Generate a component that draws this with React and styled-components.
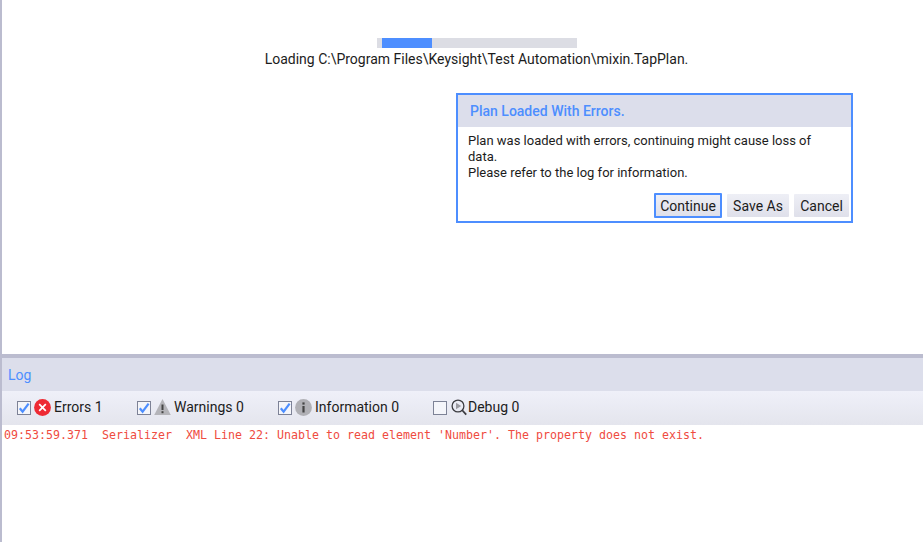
import React from 'react';
import styled, { createGlobalStyle } from 'styled-components';

const GlobalStyle = createGlobalStyle`
  html, body {
    margin: 0;
    padding: 0;
    height: 100%;
    background: #fff;
    overflow: hidden;
  }
  #root {
    height: 100%;
  }
`;

const Page = styled.div`
  display: flex;
  flex-direction: column;
  height: 542px;
  border-left: 2px solid #bbbccf;
  font-family: Roboto, 'Liberation Sans', sans-serif;
  font-size: 14px;
  color: #1c1c1c;
`;

const PlanArea = styled.div`
  height: 354px;
  flex: none;
  display: flex;
  flex-direction: column;
  align-items: center;
  padding: 38px 0 0 28px;
  box-sizing: border-box;
`;

const Track = styled.div`
  width: 200px;
  height: 10px;
  background: #dcdde4;
  padding-left: 5px;
  box-sizing: border-box;
`;

const Fill = styled.div`
  height: 100%;
  background: #4d8eff;
`;

const LoadingText = styled.div`
  margin-top: 2px;
  height: 18px;
  line-height: 18px;
  white-space: nowrap;
`;

const Dialog = styled.div`
  align-self: flex-end;
  width: 397px;
  height: 130px;
  margin: 25px 70px 0 0;
  box-sizing: border-box;
  border: 2px solid #4d8eff;
  display: flex;
  flex-direction: column;
`;

const DialogTitle = styled.div`
  height: 32px;
  flex: none;
  background: #dcdeeb;
  color: #4d8eff;
  font-weight: 500;
  line-height: 32px;
  padding-left: 12px;
`;

const DialogBody = styled.div`
  flex: 1;
  padding: 6px 10px 0;
  line-height: 16px;
  font-size: 13px;
`;

const DialogActions = styled.div`
  display: flex;
  justify-content: flex-end;
  gap: 5px;
  padding: 0 2px 3px 0;
`;

const Button = styled.button`
  height: ${props => (props.$primary ? '25px' : '23px')};
  margin: ${props => (props.$primary ? '0' : '1px 0')};
  width: ${props => props.$width}px;
  padding: 0;
  box-sizing: border-box;
  border: ${props => (props.$primary ? '2px solid #4d8eff' : 'none')};
  border-radius: 1px;
  background: linear-gradient(#eeeff6, #dfe0ea);
  font-family: inherit;
  font-size: 14px;
  color: #1c1c1c;
`;

const Splitter = styled.div`
  height: 4px;
  flex: none;
  background: #bbbccf;
`;

const LogHeader = styled.div`
  height: 33px;
  flex: none;
  background: #dcdeeb;
  color: #4d8eff;
  line-height: 35px;
  padding-left: 6px;
`;

const Toolbar = styled.div`
  height: 34px;
  flex: none;
  display: flex;
  align-items: center;
  padding: 0 0 2px 15px;
  box-sizing: border-box;
  background: linear-gradient(#eff0f9, #e4e5ed);
`;

const Filter = styled.div`
  display: flex;
  align-items: center;
  width: ${props => props.$width}px;
  flex: none;
  white-space: nowrap;
`;

const CheckBox = styled.div`
  width: 14px;
  height: 14px;
  box-sizing: border-box;
  border: 1px solid #7d8296;
  background: #f4f5fa;
  margin: 2px 3px 0 0;
  flex: none;

  svg {
    display: block;
  }
`;

const FilterIcon = styled.svg`
  width: 17px;
  height: 17px;
  flex: none;
  margin-right: ${props => props.$gap}px;
`;

const LogList = styled.div`
  flex: 1;
  padding: 3px 0 0 2px;
`;

const LogLine = styled.div`
  font-family: 'DejaVu Sans Mono', 'Liberation Mono', monospace;
  font-size: 11.64px;
  line-height: 15px;
  color: #ef4b41;
  white-space: pre;
`;

const Check = ({ checked }) => (
  <CheckBox>
    {checked && (
      <svg width="12" height="12" viewBox="0 0 12 12">
        <path d="M1.8 6.2 L4.6 9.6 L10.6 1.6" fill="none" stroke="#4d8eff" strokeWidth="2.2" />
      </svg>
    )}
  </CheckBox>
);

const ErrorIcon = () => (
  <FilterIcon viewBox="0 0 17 17" $gap={3}>
    <circle cx="8.5" cy="8.5" r="8.4" fill="#ee2a33" />
    <path d="M5.2 5.2 L11.8 11.8 M11.8 5.2 L5.2 11.8" stroke="#fff" strokeWidth="1.7" />
  </FilterIcon>
);

const WarningIcon = () => (
  <FilterIcon viewBox="0 0 17 17" $gap={3}>
    <path d="M8.5 0 L16.8 16 L0.2 16 Z" fill="#b4b4b9" />
    <path d="M8.5 5.5 V11" stroke="#444" strokeWidth="2" />
    <rect x="7.5" y="12.2" width="2" height="2" fill="#444" />
  </FilterIcon>
);

const InfoIcon = () => (
  <FilterIcon viewBox="0 0 17 17" $gap={3}>
    <circle cx="8.5" cy="8.5" r="8.4" fill="#b0b0b5" />
    <rect x="7.4" y="3.4" width="2.2" height="2.2" fill="#444" />
    <rect x="7.4" y="7" width="2.2" height="6.5" fill="#444" />
  </FilterIcon>
);

const DebugIcon = () => (
  <FilterIcon viewBox="0 0 17 17" $gap={1}>
    <circle cx="8" cy="7" r="5.9" fill="none" stroke="#3c3c40" strokeWidth="1.3" />
    <path d="M6 3.8 L11.2 7 L6 10.2 Z" fill="#9a9aa0" />
    <path d="M12 11 L16.2 15.6" stroke="#3c3c40" strokeWidth="1.8" />
  </FilterIcon>
);

const filters = [
  { label: 'Errors 1', checked: true, Icon: ErrorIcon, width: 120 },
  { label: 'Warnings 0', checked: true, Icon: WarningIcon, width: 141 },
  { label: 'Information 0', checked: true, Icon: InfoIcon, width: 155 },
  { label: 'Debug 0', checked: false, Icon: DebugIcon, width: 120 },
];

const App = () => (
  <Page>
    <GlobalStyle />
    <PlanArea>
      <Track>
        <Fill style={{ width: `${(50 / 195) * 100}%` }} />
      </Track>
      <LoadingText>Loading C:\Program Files\Keysight\Test Automation\mixin.TapPlan.</LoadingText>
      <Dialog>
        <DialogTitle>Plan Loaded With Errors.</DialogTitle>
        <DialogBody>
          Plan was loaded with errors, continuing might cause loss of
          <br />
          data.
          <br />
          Please refer to the log for information.
        </DialogBody>
        <DialogActions>
          <Button $primary $width={68}>Continue</Button>
          <Button $width={62}>Save As</Button>
          <Button $width={55}>Cancel</Button>
        </DialogActions>
      </Dialog>
    </PlanArea>
    <Splitter />
    <LogHeader>Log</LogHeader>
    <Toolbar>
      {filters.map(({ label, checked, Icon, width }) => (
        <Filter key={label} $width={width}>
          <Check checked={checked} />
          <Icon />
          {label}
        </Filter>
      ))}
    </Toolbar>
    <LogList>
      <LogLine>09:53:59.371  Serializer  XML Line 22: Unable to read element 'Number'. The property does not exist.</LogLine>
    </LogList>
  </Page>
);

export default App;
